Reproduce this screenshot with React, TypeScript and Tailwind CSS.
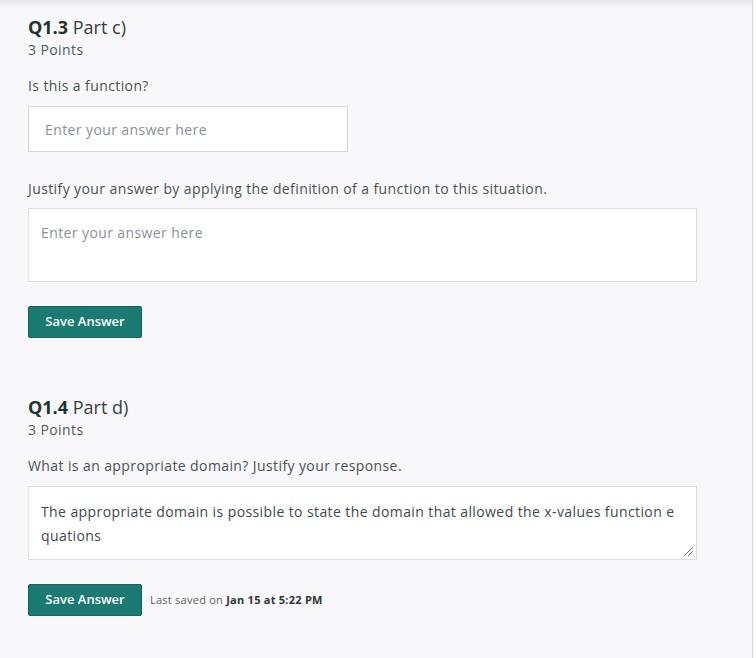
import React from 'react'

const font = { fontFamily: '"Open Sans", "Liberation Sans", Arial, sans-serif' }

function SaveButton() {
  return (
    <button
      type="button"
      className="h-8 w-[114px] rounded-[2px] border border-[#11635c] bg-[#1b7b73] text-[13px] font-semibold text-white"
    >
      Save Answer
    </button>
  )
}

function Heading({ num, part }: { num: string; part: string }) {
  return (
    <div>
      <h2 className="text-[18px] leading-[24px] tracking-normal text-[#34403f]">
        <span className="font-bold text-[#243232]">{num}</span> {part}
      </h2>
      <p className="mt-[1px] text-[14px] leading-[20px] tracking-[0.4px] text-[#50585b]">3 Points</p>
    </div>
  )
}

export default function App() {
  return (
    <div className="h-[658px] w-[756px] overflow-hidden bg-[#f8f8fa] text-[#4a5256]" style={font}>
      <div className="flex h-full">
        <div className="relative flex-1">
          <div className="pointer-events-none absolute inset-x-0 top-0 h-[7px] bg-gradient-to-b from-[#e4e4e8] to-[#f8f8fa]" />
          <div className="pl-[28px] pt-[15px] tracking-[0.4px]">
            <Heading num="Q1.3" part="Part c)" />
            <p className="mt-[16px] text-[14px] leading-[20px]">Is this a function?</p>
            <div className="mt-[10px] flex h-[46px] w-[320px] items-center border border-[#d4d6dc] bg-white pl-[16px] text-[14px] text-[#8b9096]">
              Enter your answer here
            </div>
            <p className="mt-[27px] text-[14px] leading-[20px]">
              Justify your answer by applying the definition of a function to this situation.
            </p>
            <div className="mt-[9px] h-[74px] w-[669px] border border-[#dfe0e6] bg-white px-[12px] pt-[14px] text-[14px] leading-[20px] text-[#8b9096]">
              Enter your answer here
            </div>
            <div className="mt-[24px] tracking-normal">
              <SaveButton />
            </div>

            <div className="mt-[57px]">
              <Heading num="Q1.4" part="Part d)" />
            </div>
            <p className="mt-[16px] text-[14px] leading-[20px]">What is an appropriate domain? Justify your response.</p>
            <div className="relative mt-[10px] h-[74px] w-[669px] border border-[#dfe0e6] bg-white px-[12px] pt-[13px] text-[14px] leading-[24px] text-[#41494d]">
              The appropriate domain is possible to state the domain that allowed the x-values function e
              <br />
              quations
              <svg className="absolute bottom-[2px] right-[2px]" width="11" height="11" viewBox="0 0 11 11">
                <path d="M10 1 L1 10 M10 5 L5 10" stroke="#777" strokeWidth="1" />
              </svg>
            </div>
            <div className="mt-[24px] flex items-center gap-[8px] tracking-normal">
              <SaveButton />
              <span className="text-[11px] tracking-[0.25px] text-[#5a6066]">
                Last saved on <span className="font-bold text-[#2f3539]">Jan 15 at 5:22 PM</span>
              </span>
            </div>
          </div>
        </div>
        <div className="w-[1px] bg-[#d9d9de]" />
        <div className="w-[3px] bg-[#fbfbfc]" />
      </div>
    </div>
  )
}
